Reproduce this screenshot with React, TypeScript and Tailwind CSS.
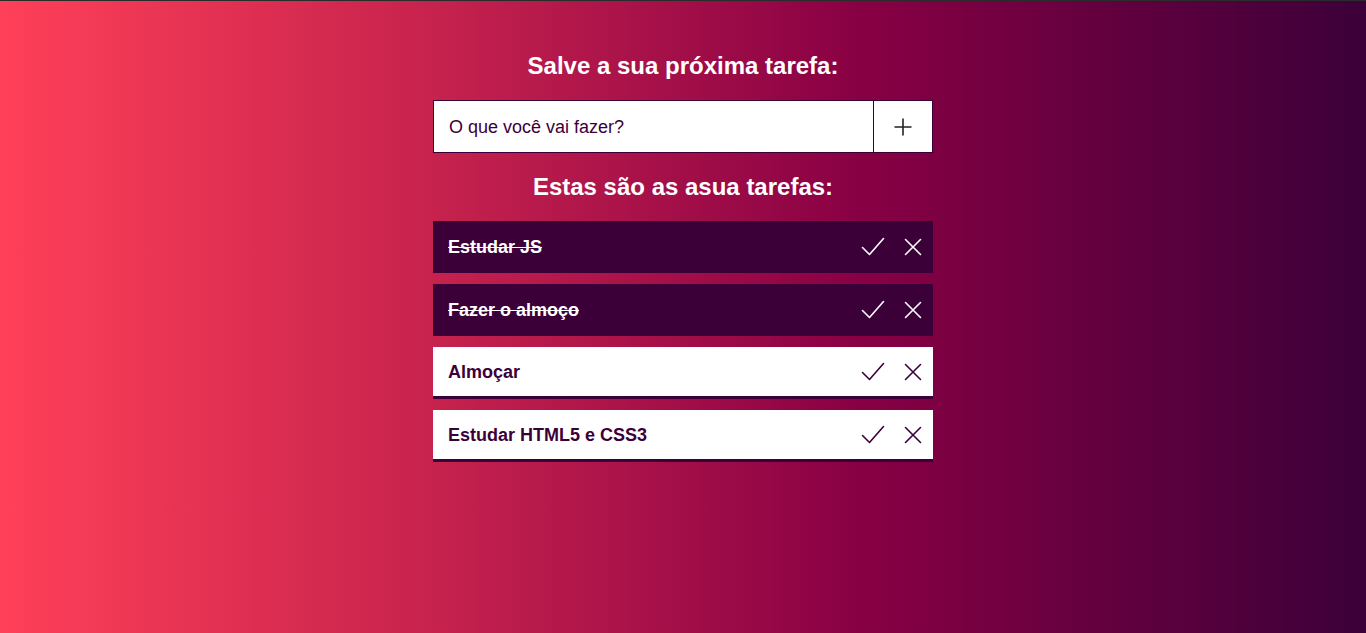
import { useState } from "react";

type Task = { id: number; text: string; done: boolean };

const initialTasks: Task[] = [
  { id: 1, text: "Estudar JS", done: true },
  { id: 2, text: "Fazer o almoço", done: true },
  { id: 3, text: "Almoçar", done: false },
  { id: 4, text: "Estudar HTML5 e CSS3", done: false },
];

function CheckIcon() {
  return (
    <svg width="24" height="20" viewBox="0 0 24 20" fill="none" stroke="currentColor" strokeWidth="1.6" strokeLinecap="round" strokeLinejoin="round">
      <path d="M1.5 10.5 L8.5 17.5 L22.5 1.5" />
    </svg>
  );
}

function XIcon() {
  return (
    <svg width="18" height="18" viewBox="0 0 18 18" fill="none" stroke="currentColor" strokeWidth="1.6" strokeLinecap="round">
      <path d="M1.5 1.5 L16.5 16.5 M16.5 1.5 L1.5 16.5" />
    </svg>
  );
}

function PlusIcon() {
  return (
    <svg width="18" height="18" viewBox="0 0 18 18" fill="none" stroke="currentColor" strokeWidth="1.6">
      <path d="M9 0.5 V17.5 M0.5 9 H17.5" />
    </svg>
  );
}

export default function App() {
  const [tasks, setTasks] = useState<Task[]>(initialTasks);
  const [value, setValue] = useState("");

  const add = () => {
    if (!value.trim()) return;
    setTasks([...tasks, { id: Date.now(), text: value.trim(), done: false }]);
    setValue("");
  };

  return (
    <div className="min-h-screen border-t border-[#2b2b2b] bg-[linear-gradient(to_right,#ff4058_0%,#c4214d_33%,#880044_63%,#3c0039_100%)] font-['Liberation_Sans',Arial,sans-serif]">
      <div className="mx-auto w-[500px] pt-[51px]">
        <h1 className="text-center text-2xl leading-7 font-bold text-white">Salve a sua próxima tarefa:</h1>

        {/* Input */}
        <div className="mt-5 flex h-[53px] border border-[#3c0039] bg-white">
          <input
            value={value}
            onChange={(e) => setValue(e.target.value)}
            onKeyDown={(e) => e.key === "Enter" && add()}
            placeholder="O que você vai fazer?"
            className="flex-1 bg-transparent px-[15px] text-lg text-[#3c0039] outline-none placeholder:text-[#3c0039]"
          />
          <button onClick={add} className="flex w-[59px] items-center justify-center border-l border-[#3c0039] text-[#222]">
            <PlusIcon />
          </button>
        </div>

        <h2 className="mt-5 text-center text-2xl leading-7 font-bold text-white">Estas são as asua tarefas:</h2>

        {/* Task list */}
        <ul className="mt-5 space-y-[11px]">
          {tasks.map((t) => (
            <li
              key={t.id}
              className={`flex h-[52px] items-center pl-[15px] pr-[11px] ${
                t.done ? "bg-[#3c0039] text-white" : "border-b-[3px] border-[#3c0039] bg-white text-[#3c0039]"
              }`}
            >
              <span className={`flex-1 text-lg font-bold ${t.done ? "line-through" : ""}`}>{t.text}</span>
              <button
                onClick={() => setTasks(tasks.map((x) => (x.id === t.id ? { ...x, done: !x.done } : x)))}
                className="mr-[19px] flex items-center"
              >
                <CheckIcon />
              </button>
              <button onClick={() => setTasks(tasks.filter((x) => x.id !== t.id))} className="flex items-center">
                <XIcon />
              </button>
            </li>
          ))}
        </ul>
      </div>
    </div>
  );
}
